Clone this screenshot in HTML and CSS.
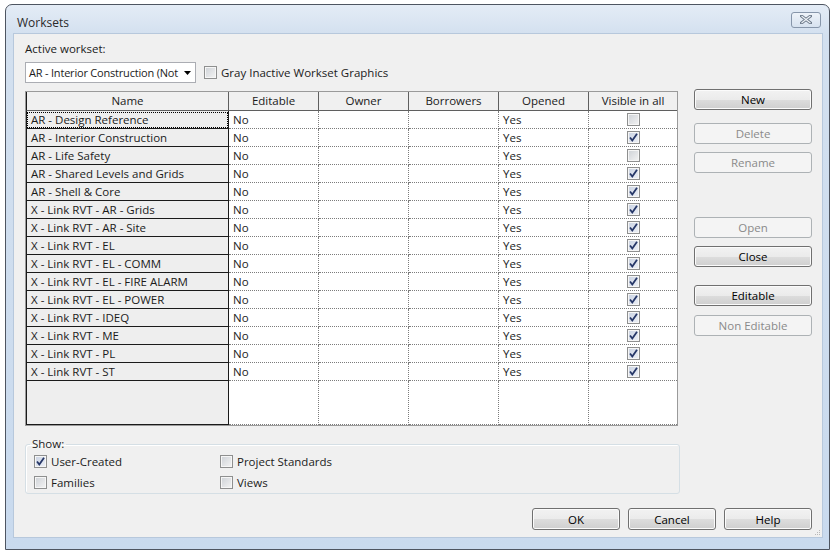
FILE: index.html
```html
<!DOCTYPE html>
<html lang="en">
<head>
    <meta charset="UTF-8">
    <title>Worksets</title>
    <link rel="stylesheet" href="styles.css">
</head>
<body>
    <div class="window">
        <div class="titlebar">
            <span class="title">Worksets</span>
            <button class="close-btn" aria-label="Close">
                <svg width="12" height="9" viewBox="0 0 12 9">
                    <path d="M1.5 1 L10.5 8 M10.5 1 L1.5 8" stroke="#6b7888" stroke-width="3" stroke-linecap="square" fill="none"/>
                    <path d="M1.5 1 L10.5 8 M10.5 1 L1.5 8" stroke="#eef2f7" stroke-width="1.2" fill="none"/>
                </svg>
            </button>
        </div>

        <div class="client">
            <div class="field-label">Active workset:</div>
            <div class="combo-row">
                <div class="combo">
                    <span class="combo-text">AR - Interior Construction (Not</span>
                    <svg class="combo-arrow" width="7" height="4" viewBox="0 0 7 4"><path d="M0 0 H7 L3.5 4 Z" fill="#000"/></svg>
                </div>
                <label class="check-label">
                    <span class="cb"></span>
                    Gray Inactive Workset Graphics
                </label>
            </div>

            <div class="main">
                <div class="grid-wrap">
                    <table class="grid">
                        <colgroup>
                            <col style="width:203px">
                            <col style="width:90px">
                            <col style="width:90px">
                            <col style="width:90px">
                            <col style="width:90px">
                            <col style="width:88px">
                        </colgroup>
                        <thead>
                            <tr>
                                <th class="name">Name</th>
                                <th>Editable</th>
                                <th>Owner</th>
                                <th>Borrowers</th>
                                <th>Opened</th>
                                <th>Visible in all</th>
                            </tr>
                        </thead>
                        <tbody id="rows"></tbody>
                    </table>
                </div>

                <div class="side-buttons">
                    <button class="btn">New</button>
                    <button class="btn gap-13" disabled>Delete</button>
                    <button class="btn gap-8" disabled>Rename</button>
                    <button class="btn gap-44" disabled>Open</button>
                    <button class="btn gap-8">Close</button>
                    <button class="btn gap-18">Editable</button>
                    <button class="btn gap-9" disabled>Non Editable</button>
                </div>
            </div>

            <fieldset class="show-group">
                <legend>Show:</legend>
                <label class="check-label"><span class="cb checked"><svg width="11" height="11" viewBox="0 0 11 11"><path d="M2 5.5 L4.3 8.5 L9 1.8" stroke="#263768" stroke-width="1.8" fill="none"/></svg></span>User-Created</label>
                <label class="check-label"><span class="cb"></span>Project Standards</label>
                <label class="check-label"><span class="cb"></span>Families</label>
                <label class="check-label"><span class="cb"></span>Views</label>
            </fieldset>

            <div class="footer">
                <button class="btn wide">OK</button>
                <button class="btn wide">Cancel</button>
                <button class="btn wide">Help</button>
                <svg class="grip" width="7" height="7" viewBox="0 0 7 7">
                    <rect x="5" y="1" width="1" height="1" fill="#b8b8b8"/>
                    <rect x="3" y="3" width="1" height="1" fill="#b8b8b8"/>
                    <rect x="5" y="3" width="1" height="1" fill="#b8b8b8"/>
                    <rect x="1" y="5" width="1" height="1" fill="#b8b8b8"/>
                    <rect x="3" y="5" width="1" height="1" fill="#b8b8b8"/>
                    <rect x="5" y="5" width="1" height="1" fill="#b8b8b8"/>
                </svg>
            </div>
        </div>
    </div>

    <script>
        const worksets = [
            ['AR - Design Reference', false],
            ['AR - Interior Construction', true],
            ['AR - Life Safety', false],
            ['AR - Shared Levels and Grids', true],
            ['AR - Shell & Core', true],
            ['X - Link RVT - AR - Grids', true],
            ['X - Link RVT - AR - Site', true],
            ['X - Link RVT - EL', true],
            ['X - Link RVT - EL - COMM', true],
            ['X - Link RVT - EL - FIRE ALARM', true],
            ['X - Link RVT - EL - POWER', true],
            ['X - Link RVT - IDEQ', true],
            ['X - Link RVT - ME', true],
            ['X - Link RVT - PL', true],
            ['X - Link RVT - ST', true]
        ];

        const check = '<svg width="11" height="11" viewBox="0 0 11 11"><path d="M2 5.5 L4.3 8.5 L9 1.8" stroke="#263768" stroke-width="1.8" fill="none"/></svg>';
        const tbody = document.getElementById('rows');

        worksets.forEach(function(ws, i) {
            const tr = document.createElement('tr');
            tr.innerHTML =
                '<td class="name' + (i === 0 ? ' focused' : '') + '">' + ws[0].replace('&', '&amp;') + '</td>' +
                '<td>No</td><td></td><td></td><td>Yes</td>' +
                '<td class="vis"><span class="cb' + (ws[1] ? ' checked">' + check : '">') + '</span></td>';
            tbody.appendChild(tr);
        });

        // empty space below the last row
        const filler = document.createElement('tr');
        filler.className = 'filler';
        filler.innerHTML = '<td class="name"></td><td></td><td></td><td></td><td></td><td class="vis"></td>';
        tbody.appendChild(filler);
    </script>
</body>
</html>
```

FILE: styles.css
```css
* {
    margin: 0;
    padding: 0;
    box-sizing: border-box;
}

body {
    background: #ffffff;
    padding: 4px 5px;
    font-family: 'Open Sans', 'Noto Sans', sans-serif;
    font-size: 11.5px;
    color: #1b1b1b;
}

.window {
    width: 825px;
    height: 546px;
    border: 1px solid #4e5561;
    border-radius: 7px 7px 0 0;
    background: linear-gradient(#e4ecf6, #d3e0ef 30px, #c9daee);
    padding: 0 6px 0 7px;
    display: flex;
    flex-direction: column;
}

.titlebar {
    height: 28px;
    display: flex;
    align-items: center;
    justify-content: space-between;
    padding-left: 4px;
    padding-right: 2px;
}

.title {
    font-size: 12px;
    color: #2a2a2a;
    margin-top: 6px;
}

.close-btn {
    width: 30px;
    height: 16px;
    margin-top: 1px;
    border: 1px solid #8796aa;
    border-radius: 3px;
    background: linear-gradient(#eef3f9, #d7e2ef);
    display: flex;
    align-items: center;
    justify-content: center;
}

.client {
    height: 505px;
    background: #f0f0f0;
    border: 1px solid #b7c8dc;
    padding: 7px 10px 7px 11px;
    display: flex;
    flex-direction: column;
    position: relative;
}

.field-label {
    height: 16px;
    line-height: 16px;
}

.combo-row {
    margin-top: 5px;
    height: 21px;
    display: flex;
    align-items: center;
    gap: 8px;
}

.combo {
    width: 171px;
    height: 21px;
    background: #fff;
    border: 1px solid #abadb3;
    display: flex;
    align-items: center;
    padding: 0 4px 0 3px;
    gap: 4px;
}

.combo-text {
    flex: 1;
    min-width: 0;
    font-size: 11px;
    letter-spacing: -0.2px;
    white-space: nowrap;
}

.combo-arrow {
    flex: none;
}

.check-label {
    display: flex;
    align-items: center;
    gap: 4px;
    white-space: nowrap;
}

.cb {
    width: 13px;
    height: 13px;
    flex: none;
    display: inline-flex;
    align-items: center;
    justify-content: center;
    border: 1px solid #8e8f8f;
    box-shadow: inset 0 0 0 1px #f6f6f6;
    background: linear-gradient(135deg, #cdd1d6, #f4f4f4);
}

.cb.checked {
    background: linear-gradient(135deg, #c9d2e2, #eef1f7);
}

.main {
    margin-top: 8px;
    display: flex;
    gap: 16px;
    align-items: flex-start;
}

.grid-wrap {
    width: 653px;
}

.grid {
    width: 653px;
    table-layout: fixed;
    border-spacing: 0;
    border: 1px solid #9a9a9a;
    background: #fff;
}

.grid th {
    height: 19px;
    font-weight: normal;
    background: #f0f0f0;
    border-right: 1px solid #5f5f5f;
    border-bottom: 1px solid #5f5f5f;
    text-align: center;
    line-height: 18px;
    padding: 0;
}

.grid th:last-child {
    border-right: none;
}

.grid td {
    height: 17px;
    line-height: 17px;
    padding: 0 4px;
    border-right: 1px dotted #7c7c7c;
    border-bottom: 1px dotted #7c7c7c;
    white-space: nowrap;
    overflow: hidden;
}

.grid td.name,
.grid th.name {
    border-left: 1px solid #1a1a1a;
}

.grid td.name {
    background: #eeeeee;
    border-right: 1px solid #1a1a1a;
    border-bottom: 1px solid #1a1a1a;
}

.grid td.vis {
    text-align: center;
    border-right: none;
    padding: 0;
}

.grid td.vis .cb {
    vertical-align: middle;
    margin-top: -2px;
}

.grid td.focused {
    outline: 1px dotted #000;
    outline-offset: -2px;
}

.grid tr.filler td {
    height: 44px;
}

.side-buttons {
    width: 118px;
    margin-top: -2px;
    display: flex;
    flex-direction: column;
}

.btn {
    height: 21px;
    width: 100%;
    font-family: inherit;
    font-size: 11.5px;
    color: #000;
    border: 1px solid #707070;
    border-radius: 3px;
    background: linear-gradient(#f2f2f2 0%, #ebebeb 50%, #dddddd 51%, #cfcfcf 100%);
    box-shadow: inset 0 0 0 1px #fbfbfb;
}

.btn:disabled {
    border-color: #adb2b5;
    background: #f4f4f4;
    color: #8a8a8a;
    box-shadow: none;
}

.gap-8 { margin-top: 8px; }
.gap-9 { margin-top: 9px; }
.gap-13 { margin-top: 13px; }
.gap-18 { margin-top: 18px; }
.gap-44 { margin-top: 44px; }

.show-group {
    margin-top: 11px;
    width: 655px;
    border: 1px solid #d5dfe5;
    border-radius: 3px;
    box-shadow: inset 1px 1px 0 #fff;
    padding: 0 0 0 8px;
    display: grid;
    grid-template-columns: 186px 1fr;
    grid-auto-rows: 21px;
    align-items: center;
}

.show-group legend {
    line-height: 14px;
    padding: 0 2px;
    margin-left: -4px;
}

.footer {
    margin-top: 14px;
    display: flex;
    justify-content: flex-end;
    gap: 8px;
}

.btn.wide {
    width: 88px;
    height: 22px;
}

.grip {
    position: absolute;
    right: 1px;
    bottom: 1px;
}
```
